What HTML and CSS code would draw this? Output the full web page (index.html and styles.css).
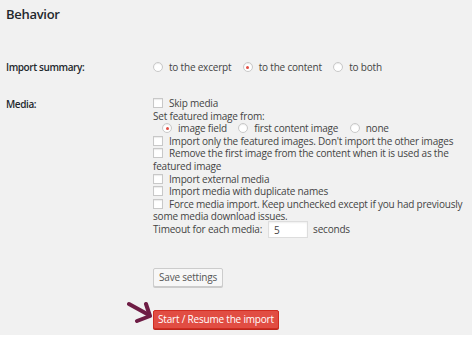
FILE: index.html
```html
<!DOCTYPE html>
<html lang="en">
<head>
    <meta charset="UTF-8">
    <title>Behavior</title>
    <link rel="stylesheet" href="styles.css">
</head>
<body>
    <div class="wrap">
        <h3 class="title">Behavior</h3>

        <div class="row summary">
            <div class="label">Import summary:</div>
            <div class="field inline">
                <label><span class="radio"></span>to the excerpt</label>
                <label><span class="radio checked"></span>to the content</label>
                <label><span class="radio"></span>to both</label>
            </div>
        </div>

        <div class="row media">
            <div class="label">Media:</div>
            <div class="field">
                <label class="check"><span class="box"></span>Skip media</label>
                <div>Set featured image from:</div>
                <div class="inline sub">
                    <label><span class="radio checked"></span>image field</label>
                    <label><span class="radio"></span>first content image</label>
                    <label><span class="radio"></span>none</label>
                </div>
                <label class="check"><span class="box"></span>Import only the featured images. Don't import the other images</label>
                <label class="check"><span class="box"></span>Remove the first image from the content when it is used as the featured image</label>
                <label class="check"><span class="box"></span>Import external media</label>
                <label class="check"><span class="box"></span>Import media with duplicate names</label>
                <label class="check"><span class="box"></span>Force media import. Keep unchecked except if you had previously some media download issues.</label>
                <div class="timeout">Timeout for each media: <span class="num">5</span> seconds</div>
            </div>
        </div>

        <div class="actions">
            <button class="btn">Save settings</button>
            <div class="start-wrap">
                <svg class="arrow" width="26" height="22" viewBox="0 0 26 22">
                    <path d="M2 3 L22 14" stroke="#6e1d45" stroke-width="4" stroke-linecap="round" fill="none"/>
                    <path d="M10 20 L23 15 L19 3" stroke="#6e1d45" stroke-width="4" stroke-linecap="round" stroke-linejoin="round" fill="none"/>
                </svg>
                <button class="btn primary">Start / Resume the import</button>
            </div>
        </div>
    </div>
</body>
</html>
```

FILE: styles.css
```css
html, body { margin: 0; background: #fff; }
body { font-family: "Open Sans", "DejaVu Sans", sans-serif; font-size: 10px; color: #444; letter-spacing: -0.2px; }
.wrap { width: 472px; height: 335px; background: #f1f1f1; padding: 0 0 0 6px; box-sizing: border-box; overflow: hidden; }
.title { margin: 0; padding-top: 5px; font-size: 13px; font-weight: 600; color: #23282d; line-height: 18px; letter-spacing: -0.3px; }
.row { display: flex; }
.label { width: 147px; flex: none; color: #23282d; font-weight: 600; letter-spacing: -0.4px; }
.summary { margin-top: 37px; line-height: 14px; }
.media { margin-top: 23px; line-height: 12.6px; }
.media .label { padding-top: 1px; }
.inline label { margin-right: 9px; }
.inline.sub { padding-left: 9px; }
.radio { display: inline-block; width: 10px; height: 10px; border: 1px solid #c8c8c8; border-radius: 50%; background: #fff; box-sizing: border-box; vertical-align: -1px; margin-right: 6px; position: relative; box-shadow: inset 0 1px 1px rgba(0,0,0,.08); }
.radio.checked::after { content: ""; position: absolute; left: 2.5px; top: 2.5px; width: 3px; height: 3px; border-radius: 50%; background: #e14d43; }
.check { display: block; }
.box { display: inline-block; width: 10px; height: 10px; border: 1px solid #c8c8c8; background: #fff; box-sizing: border-box; vertical-align: -1px; margin-right: 6px; box-shadow: inset 0 1px 1px rgba(0,0,0,.08); }
.field { width: 314px; }
.timeout { margin-top: -2px; display: flex; align-items: center; }
.num { display: inline-block; width: 40px; height: 17px; line-height: 17px; background: #fff; border: 1px solid #ddd; box-sizing: border-box; padding-left: 5px; margin: 0 5px 0 6px; box-shadow: inset 0 1px 2px rgba(0,0,0,.07); }
.actions { margin: 30px 0 0 147px; }
.btn { font-family: inherit; font-size: 10px; letter-spacing: -0.2px; height: 19px; padding: 0 5px; border: 1px solid #ccc; background: #f7f7f7; color: #555; border-radius: 2px; box-shadow: 0 1px 0 #ccc; }
.start-wrap { position: relative; margin-top: 23px; }
.btn.primary { background: #e14d43; border-color: #d02c21; color: #fff; box-shadow: 0 1px 0 #ba281e; padding: 0 4px; }
.arrow { position: absolute; left: -26px; top: -9px; }
```
